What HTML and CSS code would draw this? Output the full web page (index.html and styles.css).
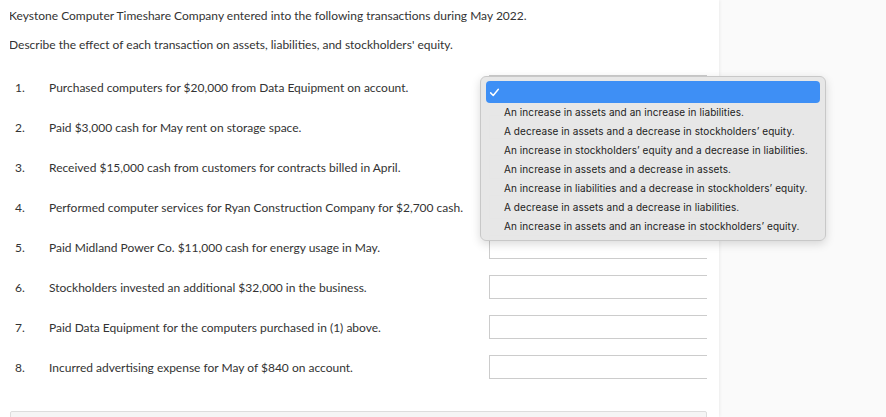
FILE: index.html
```html
<!DOCTYPE html>
<html>
<head>
<meta charset="utf-8">
<link rel="stylesheet" href="styles.css">
</head>
<body>
<div class="page">
  <div class="content">
    <p class="intro">Keystone Computer Timeshare Company entered into the following transactions during May 2022.</p>
    <p class="intro second">Describe the effect of each transaction on assets, liabilities, and stockholders' equity.</p>
    <div class="rows">
      <div class="row"><span class="num">1.</span><span class="txt">Purchased computers for $20,000 from Data Equipment on account.</span><span class="box"></span></div>
      <div class="row"><span class="num">2.</span><span class="txt">Paid $3,000 cash for May rent on storage space.</span><span class="box"></span></div>
      <div class="row"><span class="num">3.</span><span class="txt">Received $15,000 cash from customers for contracts billed in April.</span><span class="box"></span></div>
      <div class="row"><span class="num">4.</span><span class="txt">Performed computer services for Ryan Construction Company for $2,700 cash.</span><span class="box"></span></div>
      <div class="row"><span class="num">5.</span><span class="txt">Paid Midland Power Co. $11,000 cash for energy usage in May.</span><span class="box"></span></div>
      <div class="row"><span class="num">6.</span><span class="txt">Stockholders invested an additional $32,000 in the business.</span><span class="box"></span></div>
      <div class="row"><span class="num">7.</span><span class="txt">Paid Data Equipment for the computers purchased in (1) above.</span><span class="box"></span></div>
      <div class="row"><span class="num">8.</span><span class="txt">Incurred advertising expense for May of $840 on account.</span><span class="box"></span></div>
    </div>
    <div class="footer-bar"></div>
  </div>
</div>
<div class="menu">
  <div class="opt selected"><svg class="check" viewBox="0 0 12 12" width="11" height="11"><path d="M1.8 6.4 L4.6 9.2 L10.2 2.4" fill="none" stroke="#fff" stroke-width="1.6" stroke-linecap="round" stroke-linejoin="round"/></svg></div>
  <div class="opt">An increase in assets and an increase in liabilities.</div>
  <div class="opt">A decrease in assets and a decrease in stockholders’ equity.</div>
  <div class="opt">An increase in stockholders’ equity and a decrease in liabilities.</div>
  <div class="opt">An increase in assets and a decrease in assets.</div>
  <div class="opt">An increase in liabilities and a decrease in stockholders’ equity.</div>
  <div class="opt">A decrease in assets and a decrease in liabilities.</div>
  <div class="opt">An increase in assets and an increase in stockholders’ equity.</div>
</div>
</body>
</html>
```
FILE: styles.css
```css
html, body {
  margin: 0;
  padding: 0;
}
body {
  background: #fafafa;
  font-family: Lato, "Liberation Sans", sans-serif;
  color: #333;
  width: 886px;
  height: 417px;
  overflow: hidden;
  position: relative;
}
.page {
  width: 719px;
  height: 417px;
  background: #fff;
  box-shadow: 1px 0 3px rgba(0,0,0,0.06);
  padding-left: 10px;
  box-sizing: border-box;
}
.content {
  width: 697px;
  height: 417px;
  overflow: hidden;
}
.intro {
  margin: 0;
  font-size: 12px;
  line-height: 14px;
  padding-top: 9px;
  margin-left: -1px;
}
.intro.second {
  padding-top: 15px;
}
.rows {
  padding-top: 15px;
  display: flex;
  flex-direction: column;
}
.row {
  height: 40px;
  display: flex;
  align-items: center;
  font-size: 12px;
}
.num {
  width: 39px;
  padding-left: 5px;
  box-sizing: border-box;
  flex: none;
}
.txt {
  width: 440px;
  flex: none;
}
.box {
  flex: none;
  width: 240px;
  height: 24px;
  border: 1px solid #ccc;
  box-sizing: border-box;
  background: #fff;
}
.footer-bar {
  margin-top: 24px;
  height: 30px;
  border: 1px solid #ddd;
  border-radius: 2px;
  background: #f5f5f5;
}
.menu {
  position: absolute;
  left: 480px;
  top: 76px;
  width: 346px;
  height: 165px;
  box-sizing: border-box;
  background: rgba(230,230,230,0.97);
  border: 1px solid #c8c8c8;
  border-radius: 6px;
  box-shadow: 0 3px 10px rgba(0,0,0,0.15);
  padding: 4px 5px;
  font-family: Inter, "Liberation Sans", sans-serif;
  font-size: 10px;
  letter-spacing: 0.08px;
  color: #222;
}
.opt {
  height: 19px;
  line-height: 19px;
  padding-left: 18px;
  white-space: nowrap;
}
.opt.selected {
  height: 22px;
  background: #3e8ff5;
  border-radius: 4px;
  padding-left: 3px;
  display: flex;
  align-items: center;
  margin-bottom: 0;
}
.check {
  display: block;
}
```
